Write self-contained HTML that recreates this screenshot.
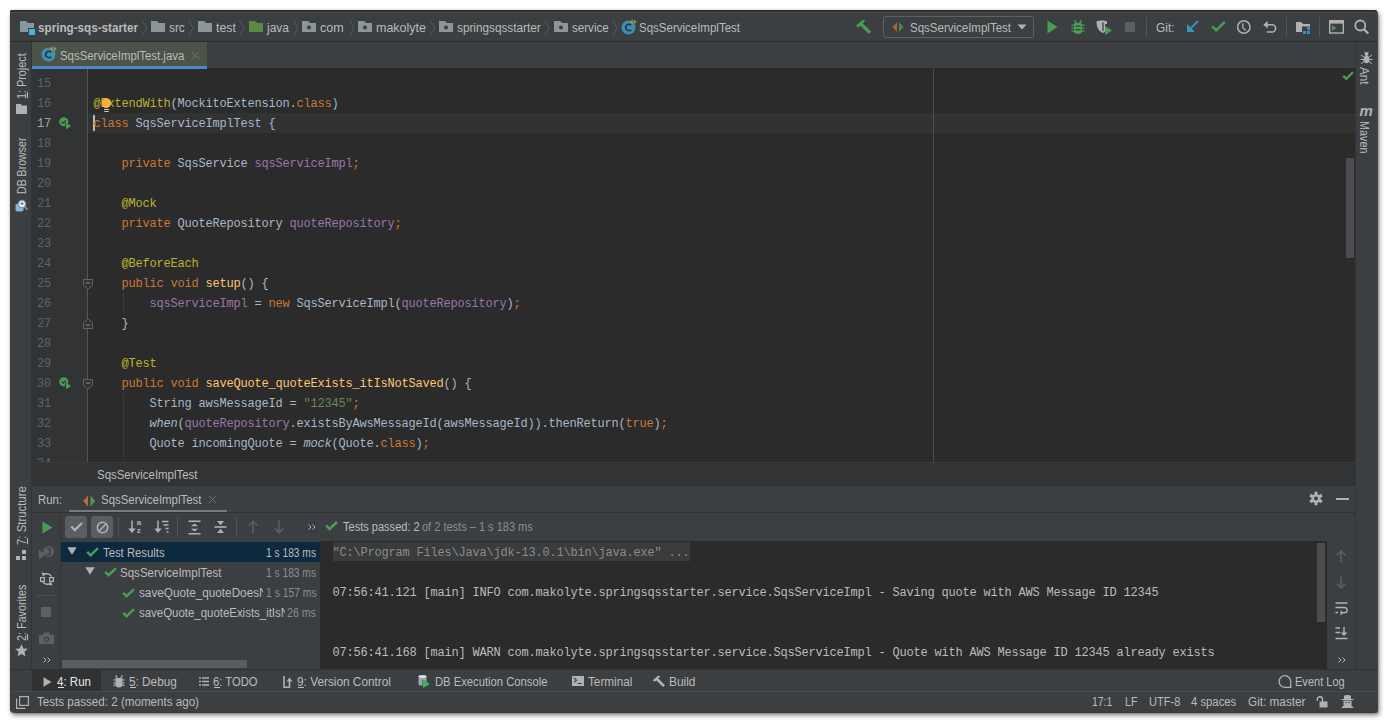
<!DOCTYPE html>
<html><head><meta charset="utf-8"><style>
html,body{margin:0;padding:0;background:#ffffff;width:1387px;height:723px;overflow:hidden;position:relative}
</style></head><body>
<div style="position:absolute;left:10px;top:10px;width:1367px;height:702px;background:#3c3f41;box-shadow:1px 1px 1px rgba(0,0,0,0.6), 2px 3px 5px rgba(0,0,0,0.55), 0 0 3px rgba(0,0,0,0.12);border-radius:2px"></div>
<div style="position:absolute;left:10px;top:10px;width:1367px;height:2px;background:#2d2f30;border-radius:2px 2px 0 0"></div><div style="position:absolute;left:10px;top:12px;width:1367px;height:1px;background:#4b4e50;"></div><div style="position:absolute;left:10px;top:41px;width:1367px;height:1px;background:#2b2b2b;"></div><div style="position:absolute;left:31px;top:42px;width:1px;height:627px;background:#323435;"></div><div style="position:absolute;left:1355px;top:42px;width:1px;height:627px;background:#323435;"></div><div style="position:absolute;left:32px;top:68px;width:1323px;height:1px;background:#2b2b2b;"></div><div style="position:absolute;left:32px;top:42px;width:175px;height:24px;background:#4c5349;"></div><div style="position:absolute;left:32px;top:66px;width:175px;height:3px;background:#4a88c7;"></div><div style="position:absolute;left:32px;top:69px;width:56px;height:393px;background:#313335;"></div><div style="position:absolute;left:87px;top:69px;width:1px;height:393px;background:#555555;"></div><div style="position:absolute;left:88px;top:69px;width:1267px;height:393px;background:#2b2b2b;"></div><div style="position:absolute;left:88px;top:113px;width:1267px;height:20px;background:#323232;"></div><div style="position:absolute;left:933px;top:69px;width:1px;height:393px;background:#4d4d4d;"></div><div style="position:absolute;left:1346px;top:158px;width:8px;height:100px;background:#4b4d4f;border-radius:1px"></div><div style="position:absolute;left:32px;top:462px;width:1323px;height:24px;background:#313335;z-index:3;border-top:1px solid #393b3d;box-sizing:border-box"></div><div style="position:absolute;left:32px;top:486px;width:1323px;height:26px;background:#3c3f41;"></div><div style="position:absolute;left:69px;top:510px;width:158px;height:2px;background:#747a80;"></div><div style="position:absolute;left:32px;top:512px;width:1323px;height:1px;background:#323232;"></div><div style="position:absolute;left:60px;top:513px;width:1px;height:156px;background:#323435;"></div><div style="position:absolute;left:61px;top:541px;width:259px;height:128px;background:#3c3f41;"></div><div style="position:absolute;left:61px;top:542px;width:259px;height:20px;background:#0d293e;"></div><div style="position:absolute;left:62px;top:660px;width:185px;height:8px;background:#5b5c5d;border-radius:1px"></div><div style="position:absolute;left:320px;top:541px;width:1007px;height:128px;background:#2b2b2b;"></div><div style="position:absolute;left:333px;top:542px;width:357px;height:19px;background:#393b3c;"></div><div style="position:absolute;left:1317px;top:543px;width:8px;height:79px;background:#4b4d4f;"></div><div style="position:absolute;left:10px;top:669px;width:1367px;height:1px;background:#323232;"></div><div style="position:absolute;left:32px;top:670px;width:69px;height:21px;background:#2f3133;"></div><div style="position:absolute;left:10px;top:691px;width:1367px;height:1px;background:#464a4d;"></div><svg style="position:absolute;left:20px;top:21px" width="16" height="15" viewBox="0 0 16 15"><path d="M0 0H6L8 2H14V11H0Z" fill="#8a959c"/><rect x="8" y="7" width="8" height="8" fill="#3c3f41"/><rect x="9" y="8" width="6" height="6" fill="#40b6e0"/></svg><svg style="position:absolute;left:142px;top:20px" width="6" height="16" viewBox="0 0 6 16"><path d="M0.5 0.5L5 8L0.5 15.5" fill="none" stroke="#55595c" stroke-width="1"/></svg><svg style="position:absolute;left:151px;top:21px" width="14" height="11" viewBox="0 0 14 11"><path d="M0 0H6L8 2H14V11H0Z" fill="#8a959c"/></svg><svg style="position:absolute;left:188px;top:20px" width="6" height="16" viewBox="0 0 6 16"><path d="M0.5 0.5L5 8L0.5 15.5" fill="none" stroke="#55595c" stroke-width="1"/></svg><svg style="position:absolute;left:198px;top:21px" width="14" height="11" viewBox="0 0 14 11"><path d="M0 0H6L8 2H14V11H0Z" fill="#8a959c"/></svg><svg style="position:absolute;left:238.5px;top:20px" width="6" height="16" viewBox="0 0 6 16"><path d="M0.5 0.5L5 8L0.5 15.5" fill="none" stroke="#55595c" stroke-width="1"/></svg><svg style="position:absolute;left:249px;top:21px" width="14" height="11" viewBox="0 0 14 11"><path d="M0 0H6L8 2H14V11H0Z" fill="#588a45"/></svg><svg style="position:absolute;left:292.5px;top:20px" width="6" height="16" viewBox="0 0 6 16"><path d="M0.5 0.5L5 8L0.5 15.5" fill="none" stroke="#55595c" stroke-width="1"/></svg><svg style="position:absolute;left:302px;top:21px" width="14" height="11" viewBox="0 0 14 11"><path d="M0 0H6L8 2H14V11H0Z" fill="#8a959c"/><circle cx="7" cy="6.5" r="2" fill="#3c3f41"/></svg><svg style="position:absolute;left:348.5px;top:20px" width="6" height="16" viewBox="0 0 6 16"><path d="M0.5 0.5L5 8L0.5 15.5" fill="none" stroke="#55595c" stroke-width="1"/></svg><svg style="position:absolute;left:358px;top:21px" width="14" height="11" viewBox="0 0 14 11"><path d="M0 0H6L8 2H14V11H0Z" fill="#8a959c"/><circle cx="7" cy="6.5" r="2" fill="#3c3f41"/></svg><svg style="position:absolute;left:429.5px;top:20px" width="6" height="16" viewBox="0 0 6 16"><path d="M0.5 0.5L5 8L0.5 15.5" fill="none" stroke="#55595c" stroke-width="1"/></svg><svg style="position:absolute;left:439px;top:21px" width="14" height="11" viewBox="0 0 14 11"><path d="M0 0H6L8 2H14V11H0Z" fill="#8a959c"/><circle cx="7" cy="6.5" r="2" fill="#3c3f41"/></svg><svg style="position:absolute;left:543.5px;top:20px" width="6" height="16" viewBox="0 0 6 16"><path d="M0.5 0.5L5 8L0.5 15.5" fill="none" stroke="#55595c" stroke-width="1"/></svg><svg style="position:absolute;left:554px;top:21px" width="14" height="11" viewBox="0 0 14 11"><path d="M0 0H6L8 2H14V11H0Z" fill="#8a959c"/><circle cx="7" cy="6.5" r="2" fill="#3c3f41"/></svg><svg style="position:absolute;left:612px;top:20px" width="6" height="16" viewBox="0 0 6 16"><path d="M0.5 0.5L5 8L0.5 15.5" fill="none" stroke="#55595c" stroke-width="1"/></svg><svg style="position:absolute;left:621px;top:19px" width="17" height="16" viewBox="0 0 17 16"><circle cx="7.5" cy="8.5" r="7" fill="#3e8eaf"/><path d="M10.2 6.3A3.2 3.2 0 1 0 10.2 10.7" fill="none" stroke="#1f3542" stroke-width="1.6"/><path d="M11.8 0.3V5.2L8.8 2.8Z" fill="#e8773a"/><path d="M12.8 0.3V5.2L15.8 2.8Z" fill="#62b543"/></svg><svg style="position:absolute;left:855px;top:19px" width="18" height="17" viewBox="0 0 18 17"><g transform="scale(1)"><path d="M1 6.5L7.5 1L10.2 1.1L8 4.5L16.2 12.7L13.8 15L5.5 6.8L3 8.5Z" fill="#499c54"/></g></svg><div style="position:absolute;left:883px;top:16px;width:151px;height:22px;background:transparent;box-sizing:border-box;border:1px solid #5e6161;border-radius:3px"></div><svg style="position:absolute;left:892px;top:21px" width="12" height="12" viewBox="0 0 12 12"><path d="M5 1V11L0.5 6Z" fill="#c0662f" opacity="0.85"/><path d="M7 1V11L11.5 6Z" fill="#499c54" opacity="0.8"/></svg><svg style="position:absolute;left:1017px;top:24px" width="10" height="6" viewBox="0 0 10 6"><path d="M0.5 0.5H9.5L5 5.5Z" fill="#afb1b3"/></svg><svg style="position:absolute;left:1047px;top:20px" width="11" height="14" viewBox="0 0 11 14"><path d="M0.5 0.5L10.5 7L0.5 13.5Z" fill="#499c54"/></svg><svg style="position:absolute;left:1071px;top:20px" width="14" height="14" viewBox="0 0 14 14"><path d="M3.5 0.5L5.5 3M10.5 0.5L8.5 3" stroke="#499c54" stroke-width="1.4"/><path d="M3 4H11V10.5A4 3.5 0 0 1 3 10.5Z" fill="#499c54"/><path d="M3.5 2.8H10.5V4.5H3.5Z" fill="#499c54"/><path d="M0.5 5.2H13.5M0.5 8.2H13.5M0.5 11.2H13.5" stroke="#499c54" stroke-width="1.3"/><path d="M4.5 6.2H9.5M4.5 9.6H9.5" stroke="#3c3f41" stroke-width="1.2"/></svg><svg style="position:absolute;left:1096px;top:20px" width="17" height="15" viewBox="0 0 17 15"><path d="M0.5 1.3C3 0.2 8 0.2 11 1.3V4H9V11.5L7 13C2 10.8 0.6 7 0.5 1.3Z" fill="#afb1b3"/><path d="M7 2.5V11" stroke="#3c3f41" stroke-width="1.3"/><path d="M9 6V15L16 10.5Z" fill="#499c54"/></svg><div style="position:absolute;left:1125px;top:22px;width:10px;height:10px;background:#5e5e5e;"></div><div style="position:absolute;left:1146px;top:17px;width:1px;height:20px;background:#515456;"></div><svg style="position:absolute;left:1186px;top:20px" width="13" height="13" viewBox="0 0 13 13"><path d="M12 1L4 9" stroke="#3592c4" stroke-width="1.8"/><path d="M1 4V12H9Z" fill="#3592c4"/></svg><svg style="position:absolute;left:1211px;top:20px" width="15" height="13" viewBox="0 0 15 13"><path d="M1.3 6.3L5.2 10.2L13.8 1.8" fill="none" stroke="#499c54" stroke-width="2.4"/></svg><svg style="position:absolute;left:1236px;top:20px" width="16" height="15" viewBox="0 0 16 15"><circle cx="7.8" cy="7" r="6.2" fill="none" stroke="#afb1b3" stroke-width="1.5"/><path d="M6.8 3.3V7.8L9.6 10.2" fill="none" stroke="#afb1b3" stroke-width="1.3"/></svg><svg style="position:absolute;left:1263px;top:20px" width="15" height="14" viewBox="0 0 15 14"><path d="M4 4.8H9A3.6 3.6 0 0 1 9 12H4" fill="none" stroke="#afb1b3" stroke-width="1.6"/><path d="M0.3 4.8L4.7 1V8.6Z" fill="#afb1b3"/></svg><div style="position:absolute;left:1286px;top:17px;width:1px;height:20px;background:#515456;"></div><svg style="position:absolute;left:1296px;top:21px" width="15" height="14" viewBox="0 0 15 14"><path d="M0 1H5L7 3H14V11H0Z" fill="#afb1b3"/><rect x="6" y="5.5" width="9" height="9" fill="#3c3f41"/><rect x="11" y="6" width="3" height="3" fill="#3592c4"/><rect x="7" y="10" width="3" height="3" fill="#3592c4"/><rect x="11" y="10" width="3" height="3" fill="#3592c4"/></svg><div style="position:absolute;left:1319px;top:17px;width:1px;height:20px;background:#515456;"></div><svg style="position:absolute;left:1329px;top:20px" width="15" height="14" viewBox="0 0 15 14"><rect x="0.7" y="0.7" width="13.6" height="12.3" fill="none" stroke="#afb1b3" stroke-width="1.4"/><rect x="1" y="1" width="13" height="2.6" fill="#afb1b3"/><path d="M3 5V11L7.2 8Z" fill="#499c54"/></svg><svg style="position:absolute;left:1354px;top:19px" width="16" height="16" viewBox="0 0 16 16"><circle cx="6.3" cy="6.5" r="5" fill="none" stroke="#afb1b3" stroke-width="1.8"/><path d="M9.8 10L14.2 14.5" stroke="#afb1b3" stroke-width="2.2"/></svg><svg style="position:absolute;left:58.5px;top:116.5px" width="14" height="14" viewBox="0 0 14 14"><circle cx="4.8" cy="4.8" r="4.6" fill="#499c54"/><path d="M2.6 4.6L4.2 6.2L6.8 3.4" fill="none" stroke="#313335" stroke-width="1.1"/><path d="M6.2 5.2V13L12.6 9Z" fill="#313335"/><path d="M7 5.5V12.2L12.2 9Z" fill="#499c54"/></svg><svg style="position:absolute;left:58.5px;top:376.5px" width="14" height="14" viewBox="0 0 14 14"><circle cx="4.8" cy="4.8" r="4.6" fill="#499c54"/><path d="M2.6 4.6L4.2 6.2L6.8 3.4" fill="none" stroke="#313335" stroke-width="1.1"/><path d="M6.2 5.2V13L12.6 9Z" fill="#313335"/><path d="M7 5.5V12.2L12.2 9Z" fill="#499c54"/></svg><svg style="position:absolute;left:83px;top:279px" width="10" height="11" viewBox="0 0 10 11"><path d="M0.5 0.5H9.5V6.5L5 10L0.5 6.5Z" fill="#313335" stroke="#5f6366" stroke-width="1"/><path d="M3 4H7" stroke="#8a8d90" stroke-width="1"/></svg><svg style="position:absolute;left:83px;top:317.5px" width="10" height="11" viewBox="0 0 10 11"><path d="M0.5 10.5H9.5V4.5L5 1L0.5 4.5Z" fill="#313335" stroke="#5f6366" stroke-width="1"/><path d="M3 7H7" stroke="#8a8d90" stroke-width="1"/></svg><svg style="position:absolute;left:83px;top:379px" width="10" height="11" viewBox="0 0 10 11"><path d="M0.5 0.5H9.5V6.5L5 10L0.5 6.5Z" fill="#313335" stroke="#5f6366" stroke-width="1"/><path d="M3 4H7" stroke="#8a8d90" stroke-width="1"/></svg><div style="position:absolute;left:123px;top:293px;width:1px;height:20px;background:#393939;"></div><div style="position:absolute;left:123px;top:393px;width:1px;height:69px;background:#393939;"></div><div style="position:absolute;left:93px;top:115px;width:2px;height:16px;background:#bbbbbb;"></div><svg style="position:absolute;left:1342px;top:71px" width="12" height="10" viewBox="0 0 12 10"><path d="M1.2 4.8L4.3 7.9L11 1.2" fill="none" stroke="#499c54" stroke-width="2.4"/></svg><svg style="position:absolute;left:101px;top:97px;z-index:5" width="11" height="16" viewBox="0 0 11 16"><circle cx="5.3" cy="6" r="4.8" fill="#f4af3d"/><path d="M3.5 9H7V11H3.5Z" fill="#f4af3d"/><path d="M3 12.5H8M3.3 14.5H7.7" stroke="#cfcfcf" stroke-width="1"/></svg><svg style="position:absolute;left:40.5px;top:46px" width="17" height="16" viewBox="0 0 17 16"><circle cx="7.5" cy="8.5" r="7" fill="#3e8eaf"/><path d="M10.2 6.3A3.2 3.2 0 1 0 10.2 10.7" fill="none" stroke="#1f3542" stroke-width="1.6"/><path d="M11.8 0.3V5.2L8.8 2.8Z" fill="#e8773a"/><path d="M12.8 0.3V5.2L15.8 2.8Z" fill="#62b543"/></svg><svg style="position:absolute;left:191px;top:51px" width="9" height="9" viewBox="0 0 9 9"><path d="M0.8 0.8L8.2 8.2M8.2 0.8L0.8 8.2" stroke="#6f7872" stroke-width="1"/></svg><svg style="position:absolute;left:1360px;top:51px" width="13" height="13" viewBox="0 0 13 13"><ellipse cx="6.5" cy="3" rx="2" ry="2" fill="#afb1b3"/><ellipse cx="6.5" cy="8.5" rx="3" ry="3.8" fill="#afb1b3"/><path d="M1 4L4 6M12 4L9 6M0.5 8.5H4M12.5 8.5H9M1 13L4 10.5M12 13L9 10.5M4.5 0.5L5.5 1.5M8.5 0.5L7.5 1.5" stroke="#afb1b3" stroke-width="1"/></svg><svg style="position:absolute;left:83px;top:494.5px" width="13" height="12" viewBox="0 0 13 12"><path d="M5 0.5V11.5L0.3 6Z" fill="#c6683d"/><path d="M7.5 0.5V11.5L12.2 6Z" fill="#499c54"/></svg><svg style="position:absolute;left:208px;top:495px" width="9" height="9" viewBox="0 0 9 9"><path d="M0.8 0.8L8.2 8.2M8.2 0.8L0.8 8.2" stroke="#6c6f72" stroke-width="1"/></svg><svg style="position:absolute;left:1309px;top:491px" width="14" height="15" viewBox="0 0 14 15"><g transform="translate(7 7.5)"><circle r="4.6" fill="#afb1b3"/><rect x="-1.5" y="-6.8" width="3" height="3" fill="#afb1b3" transform="rotate(0)"/><rect x="-1.5" y="-6.8" width="3" height="3" fill="#afb1b3" transform="rotate(60)"/><rect x="-1.5" y="-6.8" width="3" height="3" fill="#afb1b3" transform="rotate(120)"/><rect x="-1.5" y="-6.8" width="3" height="3" fill="#afb1b3" transform="rotate(180)"/><rect x="-1.5" y="-6.8" width="3" height="3" fill="#afb1b3" transform="rotate(240)"/><rect x="-1.5" y="-6.8" width="3" height="3" fill="#afb1b3" transform="rotate(300)"/><circle r="2" fill="#3c3f41"/></g></svg><div style="position:absolute;left:1336px;top:498px;width:13px;height:2px;background:#afb1b3;"></div><svg style="position:absolute;left:41.5px;top:521px" width="11" height="13" viewBox="0 0 11 13"><path d="M0.5 0.5L10.5 6.5L0.5 12.5Z" fill="#499c54"/></svg><svg style="position:absolute;left:38px;top:545px" width="17" height="16" viewBox="0 0 17 16"><path d="M0.8 4.5L7.5 9.5L0.8 14.5Z" fill="#5e6060"/><circle cx="10.6" cy="6.5" r="5.4" fill="#5e6060"/><path d="M8.8 3.3H11.8V10.2M7.6 9.8H11.8" fill="none" stroke="#3c3f41" stroke-width="1.5"/></svg><svg style="position:absolute;left:39.5px;top:571px" width="14" height="16" viewBox="0 0 14 16"><path d="M3.5 3.8A5.5 5.5 0 0 1 11.5 5.5M10.5 12.2A5.5 5.5 0 0 1 2.5 10.5" fill="none" stroke="#afb1b3" stroke-width="1.5"/><path d="M1.5 1.5L5.5 2.2L3 5.6Z" fill="#afb1b3"/><path d="M12.5 14.5L8.5 13.8L11 10.4Z" fill="#afb1b3"/><rect x="0.6" y="6.6" width="3.8" height="3.8" fill="none" stroke="#afb1b3" stroke-width="1.2"/><rect x="9.6" y="6.6" width="3.8" height="3.8" fill="none" stroke="#afb1b3" stroke-width="1.2"/></svg><div style="position:absolute;left:36px;top:595px;width:20px;height:1px;background:#4a4d4f;"></div><div style="position:absolute;left:41px;top:607px;width:10px;height:10px;background:#5e6060;"></div><svg style="position:absolute;left:39px;top:632px" width="15" height="12" viewBox="0 0 15 12"><path d="M0 3H3.5L5 0.5H10L11.5 3H15V12H0Z" fill="#5e6060"/><circle cx="7.5" cy="7.2" r="2.6" fill="#3c3f41"/><circle cx="7.5" cy="7.2" r="1.5" fill="#5e6060"/></svg><svg style="position:absolute;left:42.5px;top:656.5px" width="8" height="6" viewBox="0 0 8 6"><path d="M0.5 0.5L3 3L0.5 5.5M4.5 0.5L7 3L4.5 5.5" fill="none" stroke="#afb1b3" stroke-width="1"/></svg><div style="position:absolute;left:65px;top:516px;width:22px;height:22px;background:#5b5e61;border-radius:3px"></div><div style="position:absolute;left:91px;top:516px;width:22px;height:22px;background:#5b5e61;border-radius:3px"></div><svg style="position:absolute;left:70px;top:521px" width="13" height="11" viewBox="0 0 13 11"><path d="M1.2 5.5L4.8 9.1L12 2" fill="none" stroke="#afb1b3" stroke-width="2.3"/></svg><svg style="position:absolute;left:95.5px;top:520.5px" width="13" height="13" viewBox="0 0 13 13"><circle cx="6.5" cy="6.5" r="5.2" fill="none" stroke="#afb1b3" stroke-width="1.5"/><path d="M3 10L10 3" stroke="#afb1b3" stroke-width="1.5"/></svg><div style="position:absolute;left:118px;top:517px;width:1px;height:20px;background:#515456;"></div><svg style="position:absolute;left:128px;top:520px" width="14" height="14" viewBox="0 0 14 14"><path d="M4 0.5V11" stroke="#afb1b3" stroke-width="1.5"/><path d="M0.3 8.5H7.7L4 13Z" fill="#afb1b3"/></svg><svg style="position:absolute;left:154px;top:520px" width="15" height="14" viewBox="0 0 15 14"><path d="M4 0.5V11" stroke="#afb1b3" stroke-width="1.5"/><path d="M0.3 8.5H7.7L4 13Z" fill="#afb1b3"/><path d="M8 1.5H14.5M9.5 5H14.5M11.5 8.5H14.5M12.5 12H14.5" stroke="#afb1b3" stroke-width="1.6"/></svg><div style="position:absolute;left:177px;top:517px;width:1px;height:20px;background:#515456;"></div><svg style="position:absolute;left:187.5px;top:519.5px" width="13" height="15" viewBox="0 0 13 15"><path d="M0.5 1.3H12.5M0.5 13.7H12.5" stroke="#afb1b3" stroke-width="1.6"/><path d="M6.5 3.5L10 6.3H3Z" fill="#afb1b3"/><path d="M6.5 11.5L10 8.7H3Z" fill="#afb1b3"/></svg><svg style="position:absolute;left:213.5px;top:520px" width="13" height="14" viewBox="0 0 13 14"><path d="M0.5 7H12.5" stroke="#afb1b3" stroke-width="1.6"/><path d="M6.5 5.3L10 1H3Z" fill="#afb1b3"/><path d="M6.5 8.7L10 13H3Z" fill="#afb1b3"/></svg><div style="position:absolute;left:236px;top:517px;width:1px;height:20px;background:#515456;"></div><svg style="position:absolute;left:248px;top:520px" width="10" height="14" viewBox="0 0 10 14"><path d="M5 2V13.5" stroke="#5e6060" stroke-width="1.5"/><path d="M0.8 5.5L5 1.2L9.2 5.5" fill="none" stroke="#5e6060" stroke-width="1.5"/></svg><svg style="position:absolute;left:274px;top:520px" width="10" height="14" viewBox="0 0 10 14"><path d="M5 0.5V12" stroke="#5e6060" stroke-width="1.5"/><path d="M0.8 8.5L5 12.8L9.2 8.5" fill="none" stroke="#5e6060" stroke-width="1.5"/></svg><svg style="position:absolute;left:307.5px;top:523.5px" width="8" height="6" viewBox="0 0 8 6"><path d="M0.5 0.5L3 3L0.5 5.5M4.5 0.5L7 3L4.5 5.5" fill="none" stroke="#afb1b3" stroke-width="1"/></svg><svg style="position:absolute;left:325px;top:521px" width="13" height="10" viewBox="0 0 13 10"><path d="M1.2 4.5L4.6 7.9L12 1" fill="none" stroke="#499c54" stroke-width="2.5"/></svg><svg style="position:absolute;left:67px;top:547px" width="10" height="8" viewBox="0 0 10 8"><path d="M0.3 0.3H9.7L5 7.7Z" fill="#afb1b3"/></svg><svg style="position:absolute;left:86px;top:547px" width="13" height="10" viewBox="0 0 13 10"><path d="M1.2 4.8L4.6 8.2L12 1.2" fill="none" stroke="#499c54" stroke-width="2.5"/></svg><svg style="position:absolute;left:85px;top:567px" width="10" height="8" viewBox="0 0 10 8"><path d="M0.3 0.3H9.7L5 7.7Z" fill="#afb1b3"/></svg><svg style="position:absolute;left:104px;top:567px" width="13" height="10" viewBox="0 0 13 10"><path d="M1.2 4.8L4.6 8.2L12 1.2" fill="none" stroke="#499c54" stroke-width="2.5"/></svg><svg style="position:absolute;left:122px;top:588px" width="13" height="10" viewBox="0 0 13 10"><path d="M1.2 4.8L4.6 8.2L12 1.2" fill="none" stroke="#499c54" stroke-width="2.5"/></svg><svg style="position:absolute;left:122px;top:608px" width="13" height="10" viewBox="0 0 13 10"><path d="M1.2 4.8L4.6 8.2L12 1.2" fill="none" stroke="#499c54" stroke-width="2.5"/></svg><svg style="position:absolute;left:1336px;top:550px" width="10" height="13" viewBox="0 0 10 13"><path d="M5 1.5V12.5" stroke="#5e6060" stroke-width="1.5"/><path d="M0.8 5.3L5 1.1L9.2 5.3" fill="none" stroke="#5e6060" stroke-width="1.5"/></svg><svg style="position:absolute;left:1336px;top:576px" width="10" height="13" viewBox="0 0 10 13"><path d="M5 0.5V11.5" stroke="#5e6060" stroke-width="1.5"/><path d="M0.8 7.7L5 11.9L9.2 7.7" fill="none" stroke="#5e6060" stroke-width="1.5"/></svg><svg style="position:absolute;left:1335px;top:602px" width="13" height="14" viewBox="0 0 13 14"><path d="M0.5 1H12.5M0.5 5.5H9.5A2.6 2.6 0 0 1 9.5 10.7H6" fill="none" stroke="#afb1b3" stroke-width="1.5"/><path d="M0.5 10.5H3" stroke="#afb1b3" stroke-width="1.5"/><path d="M5.5 8L8 10.7L5.5 13.5Z" fill="#afb1b3"/></svg><svg style="position:absolute;left:1335px;top:627px" width="13" height="13" viewBox="0 0 13 13"><path d="M0.5 1H5M0.5 5.5H5M0.5 11.5H12.5" stroke="#afb1b3" stroke-width="1.5"/><path d="M9 0V7" stroke="#afb1b3" stroke-width="1.5"/><path d="M5.5 5.5H12.5L9 9Z" fill="#afb1b3"/></svg><svg style="position:absolute;left:1338px;top:657px" width="8" height="6" viewBox="0 0 8 6"><path d="M0.5 0.5L3 3L0.5 5.5M4.5 0.5L7 3L4.5 5.5" fill="none" stroke="#afb1b3" stroke-width="1"/></svg><svg style="position:absolute;left:43px;top:676.5px" width="9" height="10" viewBox="0 0 9 10"><path d="M0.5 0.3L8.5 5L0.5 9.7Z" fill="#afb1b3"/></svg><svg style="position:absolute;left:112.5px;top:675px" width="12" height="13" viewBox="0 0 12 13"><path d="M2.5 0.5L4.2 2.5M9.5 0.5L7.8 2.5" stroke="#afb1b3" stroke-width="1.2"/><path d="M2.5 3H9.5V9A3.5 3.5 0 0 1 2.5 9Z" fill="#afb1b3"/><path d="M0.3 5H11.7M0.3 8H11.7M0.8 11L2.5 9.5M11.2 11L9.5 9.5" stroke="#afb1b3" stroke-width="1.2"/></svg><svg style="position:absolute;left:199px;top:676.5px" width="10" height="9" viewBox="0 0 10 9"><path d="M0 1H2M0 4.5H2M0 8H2M3 1H10M3 4.5H10M3 8H10" stroke="#afb1b3" stroke-width="1.6"/></svg><svg style="position:absolute;left:282.5px;top:675.5px" width="11" height="12" viewBox="0 0 11 12"><path d="M1 0V11.2H6.5V5" fill="none" stroke="#afb1b3" stroke-width="1.6"/><path d="M3.5 5.5L6.5 1.5L9.5 5.5Z" fill="#afb1b3"/></svg><svg style="position:absolute;left:418px;top:675px" width="13" height="14" viewBox="0 0 13 14"><path d="M0.5 1.5A4 1.5 0 0 1 8.5 1.5V9A4 1.5 0 0 1 0.5 9Z" fill="#9aa7b0"/><ellipse cx="4.5" cy="1.6" rx="4" ry="1.3" fill="#dfe1e5"/><path d="M4.5 4.5V13.5L12.5 9Z" fill="#3c3f41"/><path d="M5 4.8V13L12 9Z" fill="#3fb34f"/></svg><svg style="position:absolute;left:572px;top:676px" width="12" height="10" viewBox="0 0 12 10"><rect width="12" height="10" fill="#afb1b3"/><path d="M2 2L4.5 4.2L2 6.4M5.5 7.5H9.5" fill="none" stroke="#3c3f41" stroke-width="1.1"/></svg><svg style="position:absolute;left:651.5px;top:674.5px" width="18" height="17" viewBox="0 0 18 17"><g transform="scale(0.8)"><path d="M1 6.5L7.5 1L10.2 1.1L8 4.5L16.2 12.7L13.8 15L5.5 6.8L3 8.5Z" fill="#afb1b3"/></g></svg><div style="position:absolute;left:58px;top:687px;width:6px;height:1px;background:#dfe1e5;"></div><div style="position:absolute;left:130px;top:687px;width:6px;height:1px;background:#bbbbbb;"></div><div style="position:absolute;left:214px;top:687px;width:6px;height:1px;background:#bbbbbb;"></div><div style="position:absolute;left:298px;top:687px;width:6px;height:1px;background:#bbbbbb;"></div><svg style="position:absolute;left:1278px;top:675px" width="14" height="13" viewBox="0 0 14 13"><path d="M12.7 12.3H6.5A5.8 5.8 0 1 1 12.7 6.5Z" fill="none" stroke="#afb1b3" stroke-width="1.3"/></svg><svg style="position:absolute;left:16px;top:695.5px" width="13" height="13" viewBox="0 0 13 13"><rect x="3.6" y="0.6" width="8.8" height="8.8" fill="none" stroke="#afb1b3" stroke-width="1.2"/><path d="M0.6 2.5V12.4H9.5" fill="none" stroke="#afb1b3" stroke-width="1.2"/></svg><svg style="position:absolute;left:1316px;top:695.5px" width="12" height="12" viewBox="0 0 12 12"><path d="M1.3 5V3.3A2.6 2.6 0 0 1 6.5 3.3V6" fill="none" stroke="#afb1b3" stroke-width="1.4"/><rect x="3.5" y="5.5" width="8" height="6" fill="#afb1b3"/></svg><svg style="position:absolute;left:1341px;top:695px" width="13" height="13" viewBox="0 0 13 13"><path d="M3 1.2A3.5 1.2 0 0 1 10 1.2V4H12.5V5H0.5V4H3Z" fill="#afb1b3"/><path d="M2.5 5.5H10.5V9.5A4 3.5 0 0 1 2.5 9.5Z" fill="#afb1b3"/><circle cx="5" cy="7.5" r="0.8" fill="#3c3f41"/><circle cx="8" cy="7.5" r="0.8" fill="#3c3f41"/><path d="M0.5 13A6 3 0 0 1 12.5 13Z" fill="#afb1b3"/></svg><svg style="position:absolute;left:16px;top:103.5px" width="11" height="10" viewBox="0 0 11 10"><path d="M0 0H4.5L6 1.5H11V10H0Z" fill="#afb1b3"/></svg><svg style="position:absolute;left:15px;top:197.5px" width="14" height="14" viewBox="0 0 14 14"><path d="M0.5 7A4 1.5 0 0 1 8.5 7V12A4 1.5 0 0 1 0.5 12Z" fill="#8cb4dc"/><circle cx="7" cy="6" r="3.6" fill="#ffffff" stroke="#8c8e90" stroke-width="1.4"/><circle cx="7" cy="5.6" r="1.6" fill="#4a8fd6"/><path d="M9.6 8.7L12.5 11.7" stroke="#8c8e90" stroke-width="1.8"/></svg><svg style="position:absolute;left:16px;top:549px" width="11" height="11" viewBox="0 0 11 11"><rect x="0" y="7" width="4" height="4" fill="#afb1b3"/><rect x="6" y="7" width="4" height="4" fill="#afb1b3"/><rect x="6" y="1" width="4" height="4" fill="#afb1b3"/></svg><svg style="position:absolute;left:15px;top:644px" width="13" height="13" viewBox="0 0 13 13"><path d="M6.5 0.3L8.4 4.4L12.8 4.8L9.5 7.8L10.4 12.2L6.5 9.9L2.6 12.2L3.5 7.8L0.2 4.8L4.6 4.4Z" fill="#afb1b3"/></svg><div style="position:absolute;left:27px;top:92px;width:1px;height:6px;background:#bbbbbb;"></div><div style="position:absolute;left:27px;top:538px;width:1px;height:6px;background:#bbbbbb;"></div><div style="position:absolute;left:27px;top:634px;width:1px;height:6px;background:#bbbbbb;"></div>
<div style="position:absolute;left:37.5px;top:18.0px;line-height:20px;font-family:'Liberation Sans';font-size:12px;font-weight:700;color:#bbbbbb;white-space:pre;transform-origin:0 0;transform:scaleX(0.9737);">spring-sqs-starter</div><div style="position:absolute;left:168.5px;top:18.0px;line-height:20px;font-family:'Liberation Sans';font-size:12px;font-weight:400;color:#bbbbbb;white-space:pre;transform-origin:0 0;transform:scaleX(0.9812);">src</div><div style="position:absolute;left:215.5px;top:18.0px;line-height:20px;font-family:'Liberation Sans';font-size:12px;font-weight:400;color:#bbbbbb;white-space:pre;transform-origin:0 0;transform:scaleX(1.0339);">test</div><div style="position:absolute;left:266.5px;top:18.0px;line-height:20px;font-family:'Liberation Sans';font-size:12px;font-weight:400;color:#bbbbbb;white-space:pre;transform-origin:0 0;transform:scaleX(0.9993);">java</div><div style="position:absolute;left:320.0px;top:18.0px;line-height:20px;font-family:'Liberation Sans';font-size:12px;font-weight:400;color:#bbbbbb;white-space:pre;transform-origin:0 0;transform:scaleX(1.0453);">com</div><div style="position:absolute;left:375.8px;top:18.0px;line-height:20px;font-family:'Liberation Sans';font-size:12px;font-weight:400;color:#bbbbbb;white-space:pre;transform-origin:0 0;transform:scaleX(1.0410);">makolyte</div><div style="position:absolute;left:456.7px;top:18.0px;line-height:20px;font-family:'Liberation Sans';font-size:12px;font-weight:400;color:#bbbbbb;white-space:pre;transform-origin:0 0;transform:scaleX(0.9804);">springsqsstarter</div><div style="position:absolute;left:571.8px;top:18.0px;line-height:20px;font-family:'Liberation Sans';font-size:12px;font-weight:400;color:#bbbbbb;white-space:pre;transform-origin:0 0;transform:scaleX(0.9654);">service</div><div style="position:absolute;left:639.3px;top:18.0px;line-height:20px;font-family:'Liberation Sans';font-size:12px;font-weight:400;color:#bbbbbb;white-space:pre;transform-origin:0 0;transform:scaleX(0.9585);">SqsServiceImplTest</div><div style="position:absolute;left:909.5px;top:18.0px;line-height:20px;font-family:'Liberation Sans';font-size:12px;font-weight:400;color:#bbbbbb;white-space:pre;transform-origin:0 0;transform:scaleX(0.9585);">SqsServiceImplTest</div><div style="position:absolute;left:1155.8px;top:18.0px;line-height:20px;font-family:'Liberation Sans';font-size:12px;font-weight:400;color:#bbbbbb;white-space:pre;transform-origin:0 0;transform:scaleX(0.9908);">Git:</div><div style="position:absolute;left:59.8px;top:46.0px;line-height:20px;font-family:'Liberation Sans';font-size:12px;font-weight:400;color:#bbbbbb;white-space:pre;transform-origin:0 0;transform:scaleX(0.9509);">SqsServiceImplTest.java</div><div style="position:absolute;left:96.7px;top:465.0px;line-height:20px;font-family:'Liberation Sans';font-size:12px;font-weight:400;color:#bbbbbb;white-space:pre;z-index:4;transform-origin:0 0;transform:scaleX(0.9537);">SqsServiceImplTest</div><div style="position:absolute;left:38.1px;top:490.0px;line-height:20px;font-family:'Liberation Sans';font-size:12px;font-weight:400;color:#bbbbbb;white-space:pre;transform-origin:0 0;transform:scaleX(0.9464);">Run:</div><div style="position:absolute;left:100.8px;top:490.0px;line-height:20px;font-family:'Liberation Sans';font-size:12px;font-weight:400;color:#bbbbbb;white-space:pre;transform-origin:0 0;transform:scaleX(0.9537);">SqsServiceImplTest</div><div style="position:absolute;left:102.8px;top:543.0px;line-height:20px;font-family:'Liberation Sans';font-size:12px;font-weight:400;color:#bbbbbb;white-space:pre;transform-origin:0 0;transform:scaleX(0.9425);">Test Results</div><div style="position:absolute;left:266.2px;top:543.0px;line-height:20px;font-family:'Liberation Sans';font-size:12px;font-weight:400;color:#bbbbbb;white-space:pre;transform-origin:0 0;transform:scaleX(0.8517);">1 s 183 ms</div><div style="position:absolute;left:120.3px;top:563.0px;line-height:20px;font-family:'Liberation Sans';font-size:12px;font-weight:400;color:#bbbbbb;white-space:pre;transform-origin:0 0;transform:scaleX(0.9623);">SqsServiceImplTest</div><div style="position:absolute;left:266.2px;top:563.0px;line-height:20px;font-family:'Liberation Sans';font-size:12px;font-weight:400;color:#8b8e91;white-space:pre;transform-origin:0 0;transform:scaleX(0.8517);">1 s 183 ms</div><div style="position:absolute;left:138.9px;top:583.0px;width:124.6px;height:20px;overflow:hidden"><div style="position:absolute;left:0;top:0;line-height:20px;font-family:'Liberation Sans';font-size:12px;font-weight:400;color:#bbbbbb;white-space:pre;transform-origin:0 0;transform:scaleX(0.9778);">saveQuote_quoteDoesN</div></div><div style="position:absolute;left:265.5px;top:583.0px;line-height:20px;font-family:'Liberation Sans';font-size:12px;font-weight:400;color:#8b8e91;white-space:pre;transform-origin:0 0;transform:scaleX(0.8620);">1 s 157 ms</div><div style="position:absolute;left:138.9px;top:603.0px;width:146.6px;height:20px;overflow:hidden"><div style="position:absolute;left:0;top:0;line-height:20px;font-family:'Liberation Sans';font-size:12px;font-weight:400;color:#bbbbbb;white-space:pre;transform-origin:0 0;transform:scaleX(0.9529);">saveQuote_quoteExists_itIsN</div></div><div style="position:absolute;left:287.3px;top:603.0px;line-height:20px;font-family:'Liberation Sans';font-size:12px;font-weight:400;color:#8b8e91;white-space:pre;transform-origin:0 0;transform:scaleX(0.8811);">26 ms</div><div style="position:absolute;left:57.1px;top:672.0px;line-height:20px;font-family:'Liberation Sans';font-size:12px;font-weight:400;color:#e6e6e6;white-space:pre;transform-origin:0 0;transform:scaleX(0.9616);">4: Run</div><div style="position:absolute;left:128.5px;top:672.0px;line-height:20px;font-family:'Liberation Sans';font-size:12px;font-weight:400;color:#bbbbbb;white-space:pre;transform-origin:0 0;transform:scaleX(0.9815);">5: Debug</div><div style="position:absolute;left:213.4px;top:672.0px;line-height:20px;font-family:'Liberation Sans';font-size:12px;font-weight:400;color:#bbbbbb;white-space:pre;transform-origin:0 0;transform:scaleX(0.9353);">6: TODO</div><div style="position:absolute;left:297.3px;top:672.0px;line-height:20px;font-family:'Liberation Sans';font-size:12px;font-weight:400;color:#bbbbbb;white-space:pre;transform-origin:0 0;transform:scaleX(0.9854);">9: Version Control</div><div style="position:absolute;left:434.5px;top:672.0px;line-height:20px;font-family:'Liberation Sans';font-size:12px;font-weight:400;color:#bbbbbb;white-space:pre;transform-origin:0 0;transform:scaleX(0.9369);">DB Execution Console</div><div style="position:absolute;left:587.5px;top:672.0px;line-height:20px;font-family:'Liberation Sans';font-size:12px;font-weight:400;color:#bbbbbb;white-space:pre;transform-origin:0 0;transform:scaleX(0.9788);">Terminal</div><div style="position:absolute;left:669.0px;top:672.0px;line-height:20px;font-family:'Liberation Sans';font-size:12px;font-weight:400;color:#bbbbbb;white-space:pre;transform-origin:0 0;transform:scaleX(0.9930);">Build</div><div style="position:absolute;left:1295.3px;top:672.0px;line-height:20px;font-family:'Liberation Sans';font-size:12px;font-weight:400;color:#bbbbbb;white-space:pre;transform-origin:0 0;transform:scaleX(0.9196);">Event Log</div><div style="position:absolute;left:36.9px;top:692.0px;line-height:20px;font-family:'Liberation Sans';font-size:12px;font-weight:400;color:#bbbbbb;white-space:pre;transform-origin:0 0;transform:scaleX(0.9676);">Tests passed: 2 (moments ago)</div><div style="position:absolute;left:1092.3px;top:692.0px;line-height:20px;font-family:'Liberation Sans';font-size:12px;font-weight:400;color:#bbbbbb;white-space:pre;transform-origin:0 0;transform:scaleX(0.8647);">17:1</div><div style="position:absolute;left:1124.9px;top:692.0px;line-height:20px;font-family:'Liberation Sans';font-size:12px;font-weight:400;color:#bbbbbb;white-space:pre;transform-origin:0 0;transform:scaleX(0.8990);">LF</div><div style="position:absolute;left:1149.2px;top:692.0px;line-height:20px;font-family:'Liberation Sans';font-size:12px;font-weight:400;color:#bbbbbb;white-space:pre;transform-origin:0 0;transform:scaleX(0.9206);">UTF-8</div><div style="position:absolute;left:1191.3px;top:692.0px;line-height:20px;font-family:'Liberation Sans';font-size:12px;font-weight:400;color:#bbbbbb;white-space:pre;transform-origin:0 0;transform:scaleX(0.9411);">4 spaces</div><div style="position:absolute;left:1247.7px;top:692.0px;line-height:20px;font-family:'Liberation Sans';font-size:12px;font-weight:400;color:#bbbbbb;white-space:pre;transform-origin:0 0;transform:scaleX(0.9798);">Git: master</div><div style="position:absolute;left:93.5px;top:94.0px;line-height:20px;font-family:'Liberation Mono';font-size:12px;font-weight:400;color:#bbb529;white-space:pre;letter-spacing:-0.202px;">@ExtendWith</div><div style="position:absolute;left:170.5px;top:94.0px;line-height:20px;font-family:'Liberation Mono';font-size:12px;font-weight:400;color:#a9b7c6;white-space:pre;letter-spacing:-0.201px;">(MockitoExtension.</div><div style="position:absolute;left:296.5px;top:94.0px;line-height:20px;font-family:'Liberation Mono';font-size:12px;font-weight:400;color:#cc7832;white-space:pre;letter-spacing:-0.203px;">class</div><div style="position:absolute;left:331.5px;top:94.0px;line-height:20px;font-family:'Liberation Mono';font-size:12px;font-weight:400;color:#a9b7c6;white-space:pre;letter-spacing:-0.203px;">)</div><div style="position:absolute;left:93.5px;top:114.0px;line-height:20px;font-family:'Liberation Mono';font-size:12px;font-weight:400;color:#cc7832;white-space:pre;letter-spacing:-0.203px;">class</div><div style="position:absolute;left:128.5px;top:114.0px;line-height:20px;font-family:'Liberation Mono';font-size:12px;font-weight:400;color:#a9b7c6;white-space:pre;letter-spacing:-0.202px;"> SqsServiceImplTest {</div><div style="position:absolute;left:121.5px;top:154.0px;line-height:20px;font-family:'Liberation Mono';font-size:12px;font-weight:400;color:#cc7832;white-space:pre;letter-spacing:-0.203px;">private</div><div style="position:absolute;left:170.5px;top:154.0px;line-height:20px;font-family:'Liberation Mono';font-size:12px;font-weight:400;color:#a9b7c6;white-space:pre;letter-spacing:-0.202px;"> SqsService </div><div style="position:absolute;left:254.5px;top:154.0px;line-height:20px;font-family:'Liberation Mono';font-size:12px;font-weight:400;color:#9876aa;white-space:pre;letter-spacing:-0.202px;">sqsServiceImpl</div><div style="position:absolute;left:352.5px;top:154.0px;line-height:20px;font-family:'Liberation Mono';font-size:12px;font-weight:400;color:#cc7832;white-space:pre;letter-spacing:-0.203px;">;</div><div style="position:absolute;left:121.5px;top:194.0px;line-height:20px;font-family:'Liberation Mono';font-size:12px;font-weight:400;color:#bbb529;white-space:pre;letter-spacing:-0.203px;">@Mock</div><div style="position:absolute;left:121.5px;top:214.0px;line-height:20px;font-family:'Liberation Mono';font-size:12px;font-weight:400;color:#cc7832;white-space:pre;letter-spacing:-0.203px;">private</div><div style="position:absolute;left:170.5px;top:214.0px;line-height:20px;font-family:'Liberation Mono';font-size:12px;font-weight:400;color:#a9b7c6;white-space:pre;letter-spacing:-0.201px;"> QuoteRepository </div><div style="position:absolute;left:289.5px;top:214.0px;line-height:20px;font-family:'Liberation Mono';font-size:12px;font-weight:400;color:#9876aa;white-space:pre;letter-spacing:-0.202px;">quoteRepository</div><div style="position:absolute;left:394.5px;top:214.0px;line-height:20px;font-family:'Liberation Mono';font-size:12px;font-weight:400;color:#cc7832;white-space:pre;letter-spacing:-0.203px;">;</div><div style="position:absolute;left:121.5px;top:254.0px;line-height:20px;font-family:'Liberation Mono';font-size:12px;font-weight:400;color:#bbb529;white-space:pre;letter-spacing:-0.202px;">@BeforeEach</div><div style="position:absolute;left:121.5px;top:274.0px;line-height:20px;font-family:'Liberation Mono';font-size:12px;font-weight:400;color:#cc7832;white-space:pre;letter-spacing:-0.203px;">public</div><div style="position:absolute;left:170.5px;top:274.0px;line-height:20px;font-family:'Liberation Mono';font-size:12px;font-weight:400;color:#cc7832;white-space:pre;letter-spacing:-0.203px;">void</div><div style="position:absolute;left:205.5px;top:274.0px;line-height:20px;font-family:'Liberation Mono';font-size:12px;font-weight:400;color:#ffc66d;white-space:pre;letter-spacing:-0.203px;">setup</div><div style="position:absolute;left:240.5px;top:274.0px;line-height:20px;font-family:'Liberation Mono';font-size:12px;font-weight:400;color:#a9b7c6;white-space:pre;letter-spacing:-0.203px;">() {</div><div style="position:absolute;left:149.5px;top:294.0px;line-height:20px;font-family:'Liberation Mono';font-size:12px;font-weight:400;color:#9876aa;white-space:pre;letter-spacing:-0.202px;">sqsServiceImpl</div><div style="position:absolute;left:247.5px;top:294.0px;line-height:20px;font-family:'Liberation Mono';font-size:12px;font-weight:400;color:#a9b7c6;white-space:pre;letter-spacing:-0.203px;"> = </div><div style="position:absolute;left:268.5px;top:294.0px;line-height:20px;font-family:'Liberation Mono';font-size:12px;font-weight:400;color:#cc7832;white-space:pre;letter-spacing:-0.203px;">new</div><div style="position:absolute;left:289.5px;top:294.0px;line-height:20px;font-family:'Liberation Mono';font-size:12px;font-weight:400;color:#a9b7c6;white-space:pre;letter-spacing:-0.201px;"> SqsServiceImpl(</div><div style="position:absolute;left:401.5px;top:294.0px;line-height:20px;font-family:'Liberation Mono';font-size:12px;font-weight:400;color:#9876aa;white-space:pre;letter-spacing:-0.202px;">quoteRepository</div><div style="position:absolute;left:506.5px;top:294.0px;line-height:20px;font-family:'Liberation Mono';font-size:12px;font-weight:400;color:#a9b7c6;white-space:pre;letter-spacing:-0.203px;">)</div><div style="position:absolute;left:513.5px;top:294.0px;line-height:20px;font-family:'Liberation Mono';font-size:12px;font-weight:400;color:#cc7832;white-space:pre;letter-spacing:-0.203px;">;</div><div style="position:absolute;left:121.5px;top:314.0px;line-height:20px;font-family:'Liberation Mono';font-size:12px;font-weight:400;color:#a9b7c6;white-space:pre;letter-spacing:-0.203px;">}</div><div style="position:absolute;left:121.5px;top:354.0px;line-height:20px;font-family:'Liberation Mono';font-size:12px;font-weight:400;color:#bbb529;white-space:pre;letter-spacing:-0.203px;">@Test</div><div style="position:absolute;left:121.5px;top:374.0px;line-height:20px;font-family:'Liberation Mono';font-size:12px;font-weight:400;color:#cc7832;white-space:pre;letter-spacing:-0.203px;">public</div><div style="position:absolute;left:170.5px;top:374.0px;line-height:20px;font-family:'Liberation Mono';font-size:12px;font-weight:400;color:#cc7832;white-space:pre;letter-spacing:-0.203px;">void</div><div style="position:absolute;left:205.5px;top:374.0px;line-height:20px;font-family:'Liberation Mono';font-size:12px;font-weight:400;color:#ffc66d;white-space:pre;letter-spacing:-0.201px;">saveQuote_quoteExists_itIsNotSaved</div><div style="position:absolute;left:443.5px;top:374.0px;line-height:20px;font-family:'Liberation Mono';font-size:12px;font-weight:400;color:#a9b7c6;white-space:pre;letter-spacing:-0.203px;">() {</div><div style="position:absolute;left:149.5px;top:394.0px;line-height:20px;font-family:'Liberation Mono';font-size:12px;font-weight:400;color:#a9b7c6;white-space:pre;letter-spacing:-0.202px;">String awsMessageId = </div><div style="position:absolute;left:303.5px;top:394.0px;line-height:20px;font-family:'Liberation Mono';font-size:12px;font-weight:400;color:#6a8759;white-space:pre;letter-spacing:-0.203px;">&quot;12345&quot;</div><div style="position:absolute;left:352.5px;top:394.0px;line-height:20px;font-family:'Liberation Mono';font-size:12px;font-weight:400;color:#cc7832;white-space:pre;letter-spacing:-0.203px;">;</div><div style="position:absolute;left:149.5px;top:414.0px;line-height:20px;font-family:'Liberation Mono';font-size:12px;font-weight:400;color:#a9b7c6;white-space:pre;letter-spacing:-0.203px;font-style:italic;">when</div><div style="position:absolute;left:177.5px;top:414.0px;line-height:20px;font-family:'Liberation Mono';font-size:12px;font-weight:400;color:#a9b7c6;white-space:pre;letter-spacing:-0.203px;">(</div><div style="position:absolute;left:184.5px;top:414.0px;line-height:20px;font-family:'Liberation Mono';font-size:12px;font-weight:400;color:#9876aa;white-space:pre;letter-spacing:-0.202px;">quoteRepository</div><div style="position:absolute;left:289.5px;top:414.0px;line-height:20px;font-family:'Liberation Mono';font-size:12px;font-weight:400;color:#a9b7c6;white-space:pre;letter-spacing:-0.201px;">.existsByAwsMessageId(awsMessageId)).thenReturn(</div><div style="position:absolute;left:625.5px;top:414.0px;line-height:20px;font-family:'Liberation Mono';font-size:12px;font-weight:400;color:#cc7832;white-space:pre;letter-spacing:-0.203px;">true</div><div style="position:absolute;left:653.5px;top:414.0px;line-height:20px;font-family:'Liberation Mono';font-size:12px;font-weight:400;color:#a9b7c6;white-space:pre;letter-spacing:-0.203px;">)</div><div style="position:absolute;left:660.5px;top:414.0px;line-height:20px;font-family:'Liberation Mono';font-size:12px;font-weight:400;color:#cc7832;white-space:pre;letter-spacing:-0.203px;">;</div><div style="position:absolute;left:149.5px;top:434.0px;line-height:20px;font-family:'Liberation Mono';font-size:12px;font-weight:400;color:#a9b7c6;white-space:pre;letter-spacing:-0.202px;">Quote incomingQuote = </div><div style="position:absolute;left:303.5px;top:434.0px;line-height:20px;font-family:'Liberation Mono';font-size:12px;font-weight:400;color:#a9b7c6;white-space:pre;letter-spacing:-0.203px;font-style:italic;">mock</div><div style="position:absolute;left:331.5px;top:434.0px;line-height:20px;font-family:'Liberation Mono';font-size:12px;font-weight:400;color:#a9b7c6;white-space:pre;letter-spacing:-0.203px;">(Quote.</div><div style="position:absolute;left:380.5px;top:434.0px;line-height:20px;font-family:'Liberation Mono';font-size:12px;font-weight:400;color:#cc7832;white-space:pre;letter-spacing:-0.203px;">class</div><div style="position:absolute;left:415.5px;top:434.0px;line-height:20px;font-family:'Liberation Mono';font-size:12px;font-weight:400;color:#a9b7c6;white-space:pre;letter-spacing:-0.203px;">)</div><div style="position:absolute;left:422.5px;top:434.0px;line-height:20px;font-family:'Liberation Mono';font-size:12px;font-weight:400;color:#cc7832;white-space:pre;letter-spacing:-0.203px;">;</div><div style="position:absolute;left:37.0px;top:74.0px;line-height:20px;font-family:'Liberation Mono';font-size:12px;font-weight:400;color:#606366;white-space:pre;letter-spacing:-0.203px;">15</div><div style="position:absolute;left:37.0px;top:94.0px;line-height:20px;font-family:'Liberation Mono';font-size:12px;font-weight:400;color:#606366;white-space:pre;letter-spacing:-0.203px;">16</div><div style="position:absolute;left:37.0px;top:114.0px;line-height:20px;font-family:'Liberation Mono';font-size:12px;font-weight:400;color:#a4a3a3;white-space:pre;letter-spacing:-0.203px;">17</div><div style="position:absolute;left:37.0px;top:134.0px;line-height:20px;font-family:'Liberation Mono';font-size:12px;font-weight:400;color:#606366;white-space:pre;letter-spacing:-0.203px;">18</div><div style="position:absolute;left:37.0px;top:154.0px;line-height:20px;font-family:'Liberation Mono';font-size:12px;font-weight:400;color:#606366;white-space:pre;letter-spacing:-0.203px;">19</div><div style="position:absolute;left:37.0px;top:174.0px;line-height:20px;font-family:'Liberation Mono';font-size:12px;font-weight:400;color:#606366;white-space:pre;letter-spacing:-0.203px;">20</div><div style="position:absolute;left:37.0px;top:194.0px;line-height:20px;font-family:'Liberation Mono';font-size:12px;font-weight:400;color:#606366;white-space:pre;letter-spacing:-0.203px;">21</div><div style="position:absolute;left:37.0px;top:214.0px;line-height:20px;font-family:'Liberation Mono';font-size:12px;font-weight:400;color:#606366;white-space:pre;letter-spacing:-0.203px;">22</div><div style="position:absolute;left:37.0px;top:234.0px;line-height:20px;font-family:'Liberation Mono';font-size:12px;font-weight:400;color:#606366;white-space:pre;letter-spacing:-0.203px;">23</div><div style="position:absolute;left:37.0px;top:254.0px;line-height:20px;font-family:'Liberation Mono';font-size:12px;font-weight:400;color:#606366;white-space:pre;letter-spacing:-0.203px;">24</div><div style="position:absolute;left:37.0px;top:274.0px;line-height:20px;font-family:'Liberation Mono';font-size:12px;font-weight:400;color:#606366;white-space:pre;letter-spacing:-0.203px;">25</div><div style="position:absolute;left:37.0px;top:294.0px;line-height:20px;font-family:'Liberation Mono';font-size:12px;font-weight:400;color:#606366;white-space:pre;letter-spacing:-0.203px;">26</div><div style="position:absolute;left:37.0px;top:314.0px;line-height:20px;font-family:'Liberation Mono';font-size:12px;font-weight:400;color:#606366;white-space:pre;letter-spacing:-0.203px;">27</div><div style="position:absolute;left:37.0px;top:334.0px;line-height:20px;font-family:'Liberation Mono';font-size:12px;font-weight:400;color:#606366;white-space:pre;letter-spacing:-0.203px;">28</div><div style="position:absolute;left:37.0px;top:354.0px;line-height:20px;font-family:'Liberation Mono';font-size:12px;font-weight:400;color:#606366;white-space:pre;letter-spacing:-0.203px;">29</div><div style="position:absolute;left:37.0px;top:374.0px;line-height:20px;font-family:'Liberation Mono';font-size:12px;font-weight:400;color:#606366;white-space:pre;letter-spacing:-0.203px;">30</div><div style="position:absolute;left:37.0px;top:394.0px;line-height:20px;font-family:'Liberation Mono';font-size:12px;font-weight:400;color:#606366;white-space:pre;letter-spacing:-0.203px;">31</div><div style="position:absolute;left:37.0px;top:414.0px;line-height:20px;font-family:'Liberation Mono';font-size:12px;font-weight:400;color:#606366;white-space:pre;letter-spacing:-0.203px;">32</div><div style="position:absolute;left:37.0px;top:434.0px;line-height:20px;font-family:'Liberation Mono';font-size:12px;font-weight:400;color:#606366;white-space:pre;letter-spacing:-0.203px;">33</div><div style="position:absolute;left:37.0px;top:454.0px;line-height:20px;font-family:'Liberation Mono';font-size:12px;font-weight:400;color:#606366;white-space:pre;letter-spacing:-0.203px;">34</div><div style="position:absolute;left:332.5px;top:543.0px;line-height:20px;font-family:'Liberation Mono';font-size:12px;font-weight:400;color:#8c8c8c;white-space:pre;letter-spacing:-0.201px;">&quot;C:\Program Files\Java\jdk-13.0.1\bin\java.exe&quot; ...</div><div style="position:absolute;left:332.5px;top:583.0px;line-height:20px;font-family:'Liberation Mono';font-size:12px;font-weight:400;color:#bbbbbb;white-space:pre;letter-spacing:-0.201px;">07:56:41.121 [main] INFO com.makolyte.springsqsstarter.service.SqsServiceImpl - Saving quote with AWS Message ID 12345</div><div style="position:absolute;left:332.5px;top:643.0px;line-height:20px;font-family:'Liberation Mono';font-size:12px;font-weight:400;color:#bbbbbb;white-space:pre;letter-spacing:-0.201px;">07:56:41.168 [main] WARN com.makolyte.springsqsstarter.service.SqsServiceImpl - Quote with AWS Message ID 12345 already exists</div><div style="position:absolute;left:12.3px;top:99.0px;line-height:20px;font-family:'Liberation Sans';font-size:12px;font-weight:400;color:#bbbbbb;white-space:pre;transform-origin:0 0;transform:rotate(-90deg) scaleX(0.9013);">1: Project</div><div style="position:absolute;left:12.3px;top:194.0px;line-height:20px;font-family:'Liberation Sans';font-size:12px;font-weight:400;color:#bbbbbb;white-space:pre;transform-origin:0 0;transform:rotate(-90deg) scaleX(0.8810);">DB Browser</div><div style="position:absolute;left:12.3px;top:545.4px;line-height:20px;font-family:'Liberation Sans';font-size:12px;font-weight:400;color:#bbbbbb;white-space:pre;transform-origin:0 0;transform:rotate(-90deg) scaleX(0.9479);">7: Structure</div><div style="position:absolute;left:12.3px;top:641.3px;line-height:20px;font-family:'Liberation Sans';font-size:12px;font-weight:400;color:#bbbbbb;white-space:pre;transform-origin:0 0;transform:rotate(-90deg) scaleX(0.8979);">2: Favorites</div><div style="position:absolute;left:1374.0px;top:67.0px;line-height:20px;font-family:'Liberation Sans';font-size:12px;font-weight:400;color:#bbbbbb;white-space:pre;transform-origin:0 0;transform:rotate(90deg) scaleX(0.9658);">Ant</div><div style="position:absolute;left:1374.0px;top:121.4px;line-height:20px;font-family:'Liberation Sans';font-size:12px;font-weight:400;color:#bbbbbb;white-space:pre;transform-origin:0 0;transform:rotate(90deg) scaleX(0.8992);">Maven</div><div style="position:absolute;left:1359.5px;top:100.5px;line-height:20px;font-family:'Liberation Sans';font-size:15px;font-weight:700;color:#afb1b3;white-space:pre;font-style:italic;">m</div><div style="position:absolute;left:136.8px;top:513.4px;line-height:20px;font-family:'Liberation Sans';font-size:8px;font-weight:700;color:#afb1b3;white-space:pre;">a</div><div style="position:absolute;left:136.8px;top:520.9px;line-height:20px;font-family:'Liberation Sans';font-size:8px;font-weight:700;color:#afb1b3;white-space:pre;">z</div><div style="position:absolute;left:343.0px;top:517.0px;line-height:20px;font-family:'Liberation Sans';font-size:12px;font-weight:400;color:#bbbbbb;white-space:pre;transform-origin:0 0;transform:scaleX(0.9198);">Tests passed: 2</div><div style="position:absolute;left:422.4px;top:517.0px;line-height:20px;font-family:'Liberation Sans';font-size:12px;font-weight:400;color:#8b8e91;white-space:pre;transform-origin:0 0;transform:scaleX(0.9177);">of 2 tests – 1 s 183 ms</div>
</body></html>
